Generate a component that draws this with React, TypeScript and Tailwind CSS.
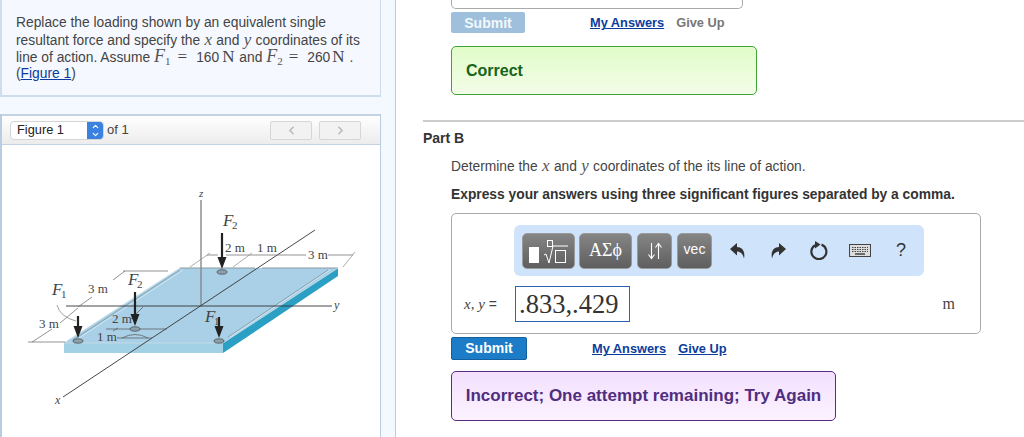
import React from "react";
import { ChevronLeft, ChevronRight, ChevronUp, ChevronDown } from "lucide-react";

const SANS = "font-['Liberation_Sans',Arial,sans-serif]";
const MATH = "font-['Liberation_Serif',serif] italic";
const SERIF = "font-['Liberation_Serif',serif]";

const Var = ({ children }: { children: React.ReactNode }) => (
  <span className={`${MATH} text-[17px] leading-[17px] text-[#555] mx-[0.500px]`}>{children}</span>
);

const Force = ({ n }: { n: number }) => (
  <span className={`${SERIF} text-[#555] leading-[17px]`}>
    <span className="italic text-[18px] leading-[17px]">F</span>
    <span className="text-[11px] leading-[11px] relative top-[3px]">{n}</span>
  </span>
);

const Links = ({ active, left }: { active: boolean; left: string }) => (
  <div className={`flex gap-[12px] text-[12.800px] font-bold pt-[1px] ${left}`}>
    <a className="text-[#0b3c9c] underline">My Answers</a>
    {active ? <a className="text-[#0b3c9c] underline">Give Up</a> : <span className="text-[#777]">Give Up</span>}
  </div>
);

const ToolButton = ({ className, children }: { className: string; children: React.ReactNode }) => (
  <div className={`h-[36px] rounded-[5px] border border-[#9a9a9a] bg-gradient-to-b from-[#858585] to-[#5f5f5f] flex items-center justify-center text-white ${className}`}>
    {children}
  </div>
);

const UndoIcon = ({ flip = false }: { flip?: boolean }) => (
  <svg width="15" height="16" viewBox="0 0 15 16" className={flip ? "-scale-x-100" : ""}>
    <path d="M0 6L7 0V4C12 4 15.500 8 14 15.500C13 11 10.500 8.500 7 8.500V12.500Z" fill="#333" />
  </svg>
);

const ResetIcon = () => (
  <svg width="18" height="19" viewBox="0 0 18 19" fill="none">
    <path d="M11.500 3.600A7.500 7.500 0 1 1 5 4.200" stroke="#333" strokeWidth="2.200" />
    <polygon points="5,0 10.500,3.500 5,7.500" fill="#333" />
  </svg>
);

const KeyboardIcon = () => (
  <svg width="22" height="13" viewBox="0 0 22 13" fill="none" stroke="#444">
    <rect x="0.500" y="0.500" width="21" height="12" fill="#ddd" />
    <path d="M3 3.500h16M3 5.500h16M3 7.500h16" strokeDasharray="1.500 1" />
    <path d="M6 10h10" strokeWidth="1.500" />
  </svg>
);

const UpDownIcon = () => (
  <svg width="16" height="18" viewBox="0 0 16 18" fill="none" stroke="#fff" strokeWidth="1.100">
    <path d="M4.500 1V16.500M1.500 12.500L4.500 16.500L7.500 12.500" />
    <path d="M11.500 17V1.500M8.500 5.500L11.500 1.500L14.500 5.500" />
  </svg>
);

const Arrow = ({ x, top, tip }: { x: number; top: number; tip: number }) => (
  <g>
    <ellipse cx={x} cy={tip + 3} rx="5" ry="2.200" fill="#8aa0ac" stroke="#444" strokeWidth="0.700" />
    <line x1={x} y1={top} x2={x} y2={tip - 8} stroke="#222" strokeWidth="2.200" />
    <polygon points={`${x - 4.500},${tip - 12} ${x + 4.500},${tip - 12} ${x},${tip}`} fill="#222" />
  </g>
);

const Label = ({ x, y, children, size = 13, italic = false }: { x: number; y: number; children: React.ReactNode; size?: number; italic?: boolean }) => (
  <text x={x} y={y} fontSize={size} fontFamily="Liberation Serif, serif" fontStyle={italic ? "italic" : "normal"} fill="#444">
    {children}
  </text>
);

const Diagram = () => (
  <svg viewBox="2 145 378 292" className="w-[378px] h-[292px] block">
    {/* plate */}
    <polygon points="180,268 338,268 223,343 64,343" fill="#a9d0e6" />
    <polygon points="64,343 223,343 223,353 64,353" fill="#a2d0e4" />
    <polygon points="338,268 338,276 223,353 223,343" fill="#2b9fc4" />
    <path d="M180,268H255M262,268H338" fill="none" stroke="#8a9aa2" strokeWidth="1" />
    <path d="M338,268L223,343H64L180,268" fill="none" stroke="#c9dde7" strokeWidth="0.800" />
    <path d="M228,337L328,270M73,340L180,270" fill="none" stroke="#7f97a4" strokeWidth="0.800" />
    <path d="M230,337L330,270M76,340L183,270" fill="none" stroke="#e2eef4" strokeWidth="0.700" />

    {/* axes */}
    <line x1="201" y1="200" x2="201" y2="306" stroke="#888" strokeWidth="1.400" />
    <line x1="66" y1="306" x2="332" y2="306" stroke="#333" strokeWidth="0.900" />
    <line x1="63" y1="397" x2="315" y2="230" stroke="#333" strokeWidth="0.900" />
    <Label x={199} y={197} size={11} italic>z</Label>
    <Label x={334} y={309} size={12} italic>y</Label>
    <Label x={55} y={404} size={12} italic>x</Label>

    {/* dimensions */}
    <path d="M207,255H218M226,255H306M328,255H353" stroke="#666" strokeWidth="0.700" fill="none" />
    <path d="M190,267L210,253M233,267L252,253M343,267L355,252" stroke="#888" strokeWidth="0.700" fill="none" />
    <path d="M123,271H168M78,307L92,297M113,280L125,271M28,342H65M32,342L52,329M60,323L78,308" stroke="#666" strokeWidth="0.700" fill="none" />
    <path d="M106,329H167M117,338H152M122,338Q135,331 148,338M113,331L118,328M131,319L143,307" stroke="#555" strokeWidth="0.700" fill="none" />
    <path d="M57,305Q60,317 76,321" stroke="#777" strokeWidth="0.700" fill="none" />

    <Label x={225} y={252}>2 m</Label>
    <Label x={257} y={252}>1 m</Label>
    <Label x={308} y={259}>3 m</Label>
    <Label x={88} y={293}>3 m</Label>
    <Label x={39} y={328}>3 m</Label>
    <Label x={112} y={323}>2 m</Label>
    <Label x={97} y={341}>1 m</Label>

    <Label x={223} y={226} size={17} italic>F</Label><Label x={232} y={229} size={11}>2</Label>
    <Label x={128} y={285} size={17} italic>F</Label><Label x={137} y={288} size={11}>2</Label>
    <Label x={52} y={295} size={17} italic>F</Label><Label x={61} y={298} size={11}>1</Label>
    <Label x={205} y={322} size={17} italic>F</Label><Label x={214} y={325} size={11}>1</Label>

    <Arrow x={222} top={233} tip={269} />
    <Arrow x={135} top={292} tip={326} />
    <Arrow x={78} top={316} tip={338} />
    <Arrow x={219} top={317} tip={338} />
  </svg>
);

export default function App() {
  return (
    <div className={`${SANS} w-[1024px] h-[437px] overflow-hidden flex bg-white text-[#333]`}>
      <div className="w-[396px] h-full shrink-0 bg-[#f4f8ff] border-r border-[#b9cde2] pr-[14px]">
        <div className="h-[97px] bg-[#f5f9ff] border-l-2 border-r border-b-2 border-[#cfdcea] pl-[14px] pt-[14px] text-[13.800px] text-[#444]">
          <p className="h-[17px] leading-[17px] whitespace-nowrap">Replace the loading shown by an equivalent single</p>
          <p className="h-[17px] leading-[17px] whitespace-nowrap">resultant force and specify the <Var>x</Var> and <Var>y</Var> coordinates of its</p>
          <p className="h-[17px] leading-[17px] whitespace-nowrap">
            line of action. Assume <Force n={1} />
            <span className={`${SERIF} text-[17px] leading-[17px] ml-[7px]`}>=</span>
            <span className="ml-[9px]">160</span>
            <span className={`${SERIF} text-[17px] leading-[17px] ml-[3px] mr-[1px]`}>N</span> and <Force n={2} />
            <span className={`${SERIF} text-[17px] leading-[17px] ml-[6px]`}>=</span>
            <span className="ml-[9px]">260</span>
            <span className={`${SERIF} text-[17px] leading-[17px] ml-[2px]`}>N</span>
            <span className="ml-[5px]">.</span>
          </p>
          <p className="h-[17px] leading-[17px]">(<a className="text-[#0b3c9c] underline">Figure 1</a>)</p>
        </div>
        <div className="mt-[17px] h-[323px] bg-white border-l-2 border-r border-[#b9cde2]">
          <div className="h-[31px] border-t-2 border-b border-[#c3d3e4] bg-gradient-to-b from-[#ffffff] to-[#ececec] flex items-center pl-[8px] pr-[19px]">
            <div className="w-[94px] h-[19px] bg-white rounded-[4px] border border-[#d5d5d5] flex items-center justify-between text-[12.800px] text-[#222] pl-[6px] overflow-hidden">
              Figure 1
              <span className="w-[16px] h-[19px] bg-[#3b82e0] rounded-r-[4px] flex flex-col items-center justify-center text-white">
                <ChevronUp size={9} strokeWidth={3} className="-mb-[1px]" />
                <ChevronDown size={9} strokeWidth={3} />
              </span>
            </div>
            <span className="ml-[3px] text-[13px] text-[#444]">of 1</span>
            <div className="ml-auto flex gap-[7px]">
              <div className="w-[42px] h-[19px] border border-[#d6d6d6] rounded-[2px] bg-[#f2f2f2] flex items-center justify-center text-[#bbb]">
                <ChevronLeft size={13} strokeWidth={3} />
              </div>
              <div className="w-[42px] h-[19px] border border-[#d6d6d6] rounded-[2px] bg-[#f2f2f2] flex items-center justify-center text-[#bbb]">
                <ChevronRight size={13} strokeWidth={3} />
              </div>
            </div>
          </div>
          <Diagram />
        </div>
      </div>

      <div className="flex-1 min-w-0 pl-[27px]">
        <div className="ml-[28px] w-[292px] h-[9px] border border-t-0 border-[#aaa] rounded-b-[5px]" />
        <div className="ml-[28px] mt-[3px] flex items-center h-[21px]">
          <div className="w-[74px] h-[21px] rounded-[2px] bg-[#9fc0dc] text-[#f2f7fb] text-[14px] font-bold flex items-center justify-center pt-[1px]">Submit</div>
          <Links active={false} left="ml-[65px]" />
        </div>
        <div className="ml-[28px] mt-[13px] w-[306px] h-[49px] rounded-[5px] border border-[#3fa33a] bg-gradient-to-b from-[#e0fcc8] to-[#f3fde8] flex items-center pl-[14px] text-[16px] font-bold text-[#17641a]">
          Correct
        </div>
        <div className="mt-[25px] h-[2px] bg-[#cccccc]" />
        <h2 className="mt-[8px] text-[14px] leading-[16px] font-bold text-[#333]">Part B</h2>
        <p className="ml-[28px] mt-[11px] h-[16px] text-[13.800px] leading-[16px] text-[#444] whitespace-nowrap">
          Determine the <Var>x</Var> and <Var>y</Var> coordinates of the its line of action.
        </p>
        <p className="ml-[28px] mt-[14px] h-[16px] text-[13.800px] leading-[16px] font-bold text-[#333] whitespace-nowrap">
          Express your answers using three significant figures separated by a comma.
        </p>

        <div className="ml-[28px] mt-[10px] w-[530px] h-[121px] rounded-[5px] border border-[#aaa] pl-[62px] pt-[11px] relative">
          <div className="w-[410px] h-[51px] rounded-[6px] bg-[#cfe4fb] flex items-center pl-[8px]">
            <ToolButton className="w-[53px] mr-[4px]">
              <svg width="44" height="28" viewBox="0 0 44 28" fill="none" stroke="#fff">
                <rect x="2" y="10" width="10" height="16" fill="#fff" stroke="none" />
                <rect x="20.500" y="3.500" width="5" height="6" />
                <path d="M17 18l2 -1 3 9 4 -17h15" />
                <rect x="28.500" y="13.500" width="10" height="12" />
              </svg>
            </ToolButton>
            <ToolButton className={`w-[53px] mr-[5px] ${SERIF} text-[18px]`}>ΑΣϕ</ToolButton>
            <ToolButton className="w-[35px] mr-[5px]"><UpDownIcon /></ToolButton>
            <ToolButton className="w-[35px] text-[14px] pb-[2px]">vec</ToolButton>
            <span className="ml-[18px]"><UndoIcon /></span>
            <span className="ml-[26px]"><UndoIcon flip /></span>
            <span className="ml-[24px]"><ResetIcon /></span>
            <span className="ml-[21px]"><KeyboardIcon /></span>
            <span className="ml-[25px] text-[18px] text-[#333]">?</span>
          </div>
          <div className="flex items-center mt-[10px] h-[36px]">
            <span className="absolute left-[12px] text-[14px] text-[#444] whitespace-nowrap">
              <span className={`${MATH} text-[15px]`}>x, y</span> =
            </span>
            <div className={`ml-[1px] w-[115px] h-[36px] border border-[#2f62b3] ${SERIF} text-[26.500px] leading-[34px] pl-[3px] text-[#333]`}>
              .833,.429
            </div>
            <span className={`absolute right-[25px] ${SERIF} text-[16px] text-[#444]`}>m</span>
          </div>
        </div>

        <div className="ml-[28px] mt-[3px] flex items-center h-[23px]">
          <div className="w-[76px] h-[23px] rounded-[2px] bg-[#1c7cc8] border border-[#14609c] text-white text-[14px] font-bold flex items-center justify-center">Submit</div>
          <Links active left="ml-[65px]" />
        </div>
        <div className="ml-[28px] mt-[11px] w-[385px] h-[50px] rounded-[5px] border border-[#5a2a84] bg-gradient-to-b from-[#f3e0fd] to-[#fcf2ff] flex items-center justify-center text-[17px] font-bold text-[#4f2d7f] whitespace-nowrap">
          Incorrect; One attempt remaining; Try Again
        </div>
      </div>
    </div>
  );
}
